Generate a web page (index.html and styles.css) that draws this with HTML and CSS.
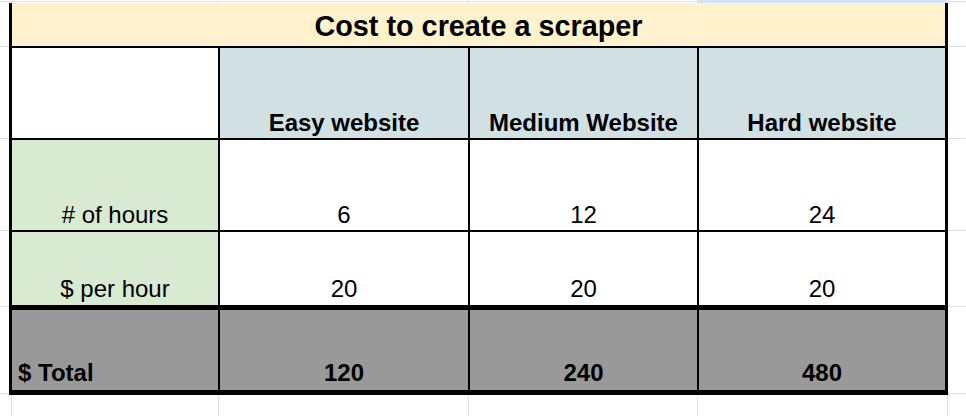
FILE: index.html
```html
<!DOCTYPE html>
<html lang="en">
<head>
<meta charset="utf-8">
<title>Cost to create a scraper</title>
<link rel="stylesheet" href="styles.css">
</head>
<body>
<div class="sheet">
  <div class="table">
    <div class="title">Cost to create a scraper</div>
    <div class="grid">
      <div class="cell blank"></div>
      <div class="cell head">Easy website</div>
      <div class="cell head">Medium Website</div>
      <div class="cell head">Hard website</div>

      <div class="cell label">#&nbsp;of hours</div>
      <div class="cell">6</div>
      <div class="cell">12</div>
      <div class="cell">24</div>

      <div class="cell label low">$ per hour</div>
      <div class="cell low">20</div>
      <div class="cell low">20</div>
      <div class="cell low">20</div>
    </div>
    <div class="grid total">
      <div class="cell sum sum-label">$ Total</div>
      <div class="cell sum">120</div>
      <div class="cell sum">240</div>
      <div class="cell sum">480</div>
    </div>
  </div>
</div>
</body>
</html>
```

FILE: styles.css
```css
html, body {
  margin: 0;
  padding: 0;
  background: #fff;
}

body {
  font-family: "Liberation Sans", Arial, sans-serif;
  color: #000;
}

.sheet {
  width: 966px;
  height: 416px;
  overflow: hidden;
  box-sizing: border-box;
  padding: 3px 0 0 9px;
  background:
    linear-gradient(#d6e2f5, #d6e2f5) 698px 0 / 249px 3px no-repeat,
    linear-gradient(#e2e2e2, #e2e2e2) 0 1px / 100% 1px no-repeat,
    linear-gradient(#e2e2e2, #e2e2e2) 0 46px / 100% 1px no-repeat,
    linear-gradient(#e2e2e2, #e2e2e2) 0 138px / 100% 1px no-repeat,
    linear-gradient(#e2e2e2, #e2e2e2) 0 230px / 100% 1px no-repeat,
    linear-gradient(#e2e2e2, #e2e2e2) 0 306px / 100% 1px no-repeat,
    linear-gradient(#e2e2e2, #e2e2e2) 0 393px / 100% 1px no-repeat,
    linear-gradient(#e2e2e2, #e2e2e2) 11px 0 / 1px 100% no-repeat,
    linear-gradient(#e2e2e2, #e2e2e2) 218px 0 / 1px 100% no-repeat,
    linear-gradient(#e2e2e2, #e2e2e2) 468px 0 / 1px 100% no-repeat,
    linear-gradient(#e2e2e2, #e2e2e2) 697px 0 / 1px 100% no-repeat,
    linear-gradient(#e2e2e2, #e2e2e2) 947px 0 / 1px 100% no-repeat,
    #fff;
}

.table {
  width: 939px;
  box-sizing: border-box;
  border-left: 3px solid #000;
  border-right: 3px solid #000;
}

.title {
  height: 45px;
  box-sizing: border-box;
  background: #fff2cc;
  border-bottom: 2px solid #000;
  display: flex;
  justify-content: center;
  align-items: flex-end;
  padding-bottom: 3px;
  font-size: 28.8px;
  font-weight: bold;
  line-height: normal;
  white-space: nowrap;
}

.grid {
  display: grid;
  grid-template-columns: 206px 248px 227px 246px;
  grid-template-rows: 90px 90px 73px;
  gap: 2px;
  background: #000;
}

.grid.total {
  grid-template-rows: 80px;
  border-top: 5px solid #000;
  border-bottom: 5px solid #000;
}

.cell {
  display: flex;
  justify-content: center;
  align-items: flex-end;
  box-sizing: border-box;
  padding-bottom: 1px;
  background: #fff;
  font-size: 24px;
  line-height: normal;
  white-space: nowrap;
}

.cell.low {
  padding-bottom: 2px;
}

.head {
  background: #d0e0e3;
  font-weight: bold;
}

.label {
  background: #d9ead3;
}

.sum {
  background: #999999;
  font-weight: bold;
  padding-bottom: 3px;
}

.sum-label {
  justify-content: flex-start;
  padding-left: 6px;
}
```
